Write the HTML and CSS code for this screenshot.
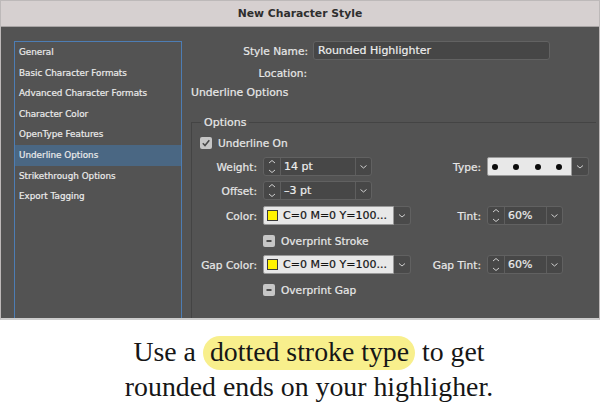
FILE: index.html
```html
<!DOCTYPE html>
<html>
<head>
<meta charset="utf-8">
<link rel="stylesheet" href="styles.css">
</head>
<body>
<div class="dialog">
  <div class="titlebar">New Character Style</div>
  <div class="panel">
    <ul class="sidebar">
      <li>General</li>
      <li>Basic Character Formats</li>
      <li>Advanced Character Formats</li>
      <li>Character Color</li>
      <li>OpenType Features</li>
      <li class="sel">Underline Options</li>
      <li>Strikethrough Options</li>
      <li>Export Tagging</li>
    </ul>
    <div class="main">
      <div class="namerow">
        <span class="lbl">Style Name:</span>
        <div class="textinput">Rounded Highlighter</div>
      </div>
      <div class="locrow"><span class="lbl">Location:</span></div>
      <div class="section">Underline Options</div>
      <div class="group">
        <div class="legend">Options</div>
        <div class="grid">
          <div class="check first">
            <span class="box"><svg width="12" height="12" viewBox="0 0 12 12"><path d="M2.8 6.2 L5 8.6 L9.3 3.3" fill="none" stroke="#4a4a4a" stroke-width="1.6"/></svg></span>
            <span>Underline On</span>
          </div>

          <span class="flabel">Weight:</span>
          <div class="combo w109">
            <span class="spin"><svg width="16" height="17" viewBox="0 0 16 17"><path d="M5 5 L8 2.5 L11 5 M5 12 L8 14.5 L11 12" fill="none" stroke="#cfcfcf" stroke-width="1"/></svg></span>
            <span class="val">14 pt</span>
            <span class="drop"><svg width="15" height="17" viewBox="0 0 15 17"><path d="M4.5 7.5 L7.5 10 L10.5 7.5" fill="none" stroke="#cfcfcf" stroke-width="1"/></svg></span>
          </div>
          <span class="flabel">Type:</span>
          <div class="lcombo w102">
            <span class="light dots"><i></i><i></i><i></i><i></i></span>
            <span class="ldrop"><svg width="16" height="17" viewBox="0 0 16 17"><path d="M5 7.5 L8 10 L11 7.5" fill="none" stroke="#cfcfcf" stroke-width="1"/></svg></span>
          </div>

          <span class="flabel">Offset:</span>
          <div class="combo w109">
            <span class="spin"><svg width="16" height="17" viewBox="0 0 16 17"><path d="M5 5 L8 2.5 L11 5 M5 12 L8 14.5 L11 12" fill="none" stroke="#cfcfcf" stroke-width="1"/></svg></span>
            <span class="val">–3 pt</span>
            <span class="drop"><svg width="15" height="17" viewBox="0 0 15 17"><path d="M4.5 7.5 L7.5 10 L10.5 7.5" fill="none" stroke="#cfcfcf" stroke-width="1"/></svg></span>
          </div>
          <span class="filler"></span>

          <span class="flabel">Color:</span>
          <div class="lcombo w148">
            <span class="light swatchfield"><span class="swatch"></span>C=0 M=0 Y=100...</span>
            <span class="ldrop"><svg width="16" height="17" viewBox="0 0 16 17"><path d="M5 7.5 L8 10 L11 7.5" fill="none" stroke="#cfcfcf" stroke-width="1"/></svg></span>
          </div>
          <span class="flabel">Tint:</span>
          <div class="combo w76">
            <span class="spin"><svg width="16" height="17" viewBox="0 0 16 17"><path d="M5 5 L8 2.5 L11 5 M5 12 L8 14.5 L11 12" fill="none" stroke="#cfcfcf" stroke-width="1"/></svg></span>
            <span class="val">60%</span>
            <span class="drop"><svg width="15" height="17" viewBox="0 0 15 17"><path d="M4.5 7.5 L7.5 10 L10.5 7.5" fill="none" stroke="#cfcfcf" stroke-width="1"/></svg></span>
          </div>

          <div class="check sub">
            <span class="box"><svg width="12" height="12" viewBox="0 0 12 12"><path d="M3.5 6 H8.5" fill="none" stroke="#4a4a4a" stroke-width="2"/></svg></span>
            <span>Overprint Stroke</span>
          </div>

          <span class="flabel">Gap Color:</span>
          <div class="lcombo w148">
            <span class="light swatchfield"><span class="swatch"></span>C=0 M=0 Y=100...</span>
            <span class="ldrop"><svg width="16" height="17" viewBox="0 0 16 17"><path d="M5 7.5 L8 10 L11 7.5" fill="none" stroke="#cfcfcf" stroke-width="1"/></svg></span>
          </div>
          <span class="flabel">Gap Tint:</span>
          <div class="combo w76">
            <span class="spin"><svg width="16" height="17" viewBox="0 0 16 17"><path d="M5 5 L8 2.5 L11 5 M5 12 L8 14.5 L11 12" fill="none" stroke="#cfcfcf" stroke-width="1"/></svg></span>
            <span class="val">60%</span>
            <span class="drop"><svg width="15" height="17" viewBox="0 0 15 17"><path d="M4.5 7.5 L7.5 10 L10.5 7.5" fill="none" stroke="#cfcfcf" stroke-width="1"/></svg></span>
          </div>

          <div class="check sub">
            <span class="box"><svg width="12" height="12" viewBox="0 0 12 12"><path d="M3.5 6 H8.5" fill="none" stroke="#4a4a4a" stroke-width="2"/></svg></span>
            <span>Overprint Gap</span>
          </div>
        </div>
      </div>
    </div>
  </div>
</div>
<p class="caption">Use a <span class="hl">dotted stroke type</span> to get<br>rounded ends on your highligher.</p>
</body>
</html>
```
FILE: styles.css
```css
body {
  margin: 0;
  background: #ffffff;
  font-family: "DejaVu Sans", sans-serif;
}

.dialog {
  width: 600px;
  height: 320px;
  box-sizing: border-box;
  border: 1px solid #bdb9b9;
  border-bottom: 2px solid #cdcdcd;
  display: flex;
  flex-direction: column;
}

.titlebar {
  height: 25px;
  flex: none;
  background: #d6d0d0;
  border-bottom: 1px solid #a8a4a4;
  display: flex;
  align-items: center;
  justify-content: center;
  font-weight: bold;
  font-size: 10.8px;
  color: #2e2e2e;
}

.panel {
  flex: 1;
  min-height: 0;
  background: #535353;
  display: flex;
  gap: 9px;
  padding: 14px 3px 0 13px;
  -webkit-text-stroke: 0.2px currentColor;
}

.sidebar {
  width: 168px;
  flex: none;
  box-sizing: border-box;
  border: 1px solid #4d7db4;
  border-bottom: none;
  margin: 0;
  padding: 0;
  list-style: none;
  font-size: 8.8px;
  color: #ececec;
}

.sidebar li {
  height: 20.6px;
  line-height: 20.6px;
  padding-left: 4px;
}

.sidebar li.sel {
  background: #4a6783;
}

.main {
  flex: 1;
  display: flex;
  flex-direction: column;
  color: #e8e8e8;
  font-size: 10.6px;
}

.namerow {
  display: flex;
  align-items: center;
  height: 19px;
}

.namerow .lbl {
  width: 117px;
  text-align: right;
}

.textinput {
  margin-left: 5px;
  width: 237px;
  height: 19px;
  box-sizing: border-box;
  background: #464646;
  border: 1px solid #626262;
  border-radius: 3px;
  padding-left: 4px;
  font-size: 11px;
  line-height: 17px;
  color: #ececec;
}

.locrow {
  margin-top: 6px;
  height: 14px;
  line-height: 14px;
}

.locrow .lbl {
  display: inline-block;
  width: 116px;
  text-align: right;
}

.section {
  margin-top: 5px;
  height: 16px;
  line-height: 16px;
  font-size: 10.8px;
}

.group {
  margin-top: 21px;
  flex: 1;
  border-top: 1px solid #444444;
  border-left: 1px solid #444444;
}

.legend {
  display: table;
  margin: -8px 0 0 9px;
  padding: 0 3px;
  background: #535353;
  font-size: 11px;
  line-height: 15px;
}

.grid {
  margin-top: 1px;
  display: grid;
  grid-template-columns: 65px 148px 64px 1fr;
  grid-template-rows: 24px 23px 25px 25px 25px 23px 27px;
  column-gap: 6px;
  align-items: center;
}

.filler {
  grid-column: 3 / -1;
}

.flabel {
  text-align: right;
  white-space: nowrap;
}

.check {
  display: flex;
  align-items: center;
  gap: 6px;
}

.check.first {
  grid-column: 1 / -1;
  padding-left: 8px;
}

.check.sub {
  grid-column: 2 / -1;
  gap: 6px;
}

.box {
  width: 12px;
  height: 12px;
  background: #c6c6c6;
  border-radius: 2px;
  display: flex;
  -webkit-text-stroke: 0;
}

.combo {
  display: flex;
  height: 19px;
  box-sizing: border-box;
  border: 1px solid #616161;
  border-radius: 3px;
  background: #474747;
  font-size: 11px;
  color: #ececec;
}

.w109 { width: 109px; }
.w76 { width: 76px; }
.w102 { width: 102px; }
.w148 { width: 148px; }

.spin {
  width: 16px;
  border-right: 1px solid #5e5e5e;
  display: flex;
}

.val {
  flex: 1;
  padding-left: 3px;
  line-height: 17px;
}

.drop {
  width: 15px;
  border-left: 1px solid #5e5e5e;
  display: flex;
}

.lcombo {
  display: flex;
  height: 19px;
}

.light {
  flex: 1;
  box-sizing: border-box;
  background: #e8e8e8;
  border: 1px solid #9a9a9a;
  border-radius: 2px 0 0 2px;
}

.dots {
  display: flex;
  align-items: center;
  justify-content: space-between;
  padding: 0 9px 0 4px;
}

.dots i {
  width: 6px;
  height: 6px;
  border-radius: 50%;
  background: #0a0a0a;
}

.swatchfield {
  display: flex;
  align-items: center;
  gap: 5px;
  padding-left: 3px;
  font-size: 11px;
  color: #151515;
  white-space: nowrap;
  overflow: hidden;
}

.swatch {
  width: 11px;
  height: 11px;
  box-sizing: border-box;
  background: #fff200;
  border: 1px solid #3a3a3a;
  flex: none;
}

.ldrop {
  width: 17px;
  box-sizing: border-box;
  border: 1px solid #616161;
  border-left: none;
  border-radius: 0 3px 3px 0;
  background: #4a4a4a;
  display: flex;
}

.caption {
  margin: 0;
  padding: 14px 0 0 18px;
  text-align: center;
  font-family: "Liberation Serif", serif;
  font-size: 27.8px;
  line-height: 35px;
  color: #161616;
}

.hl {
  background: #f8ef8c;
  border-radius: 17px;
  padding: 0 6px 3px 7px;
}
```
